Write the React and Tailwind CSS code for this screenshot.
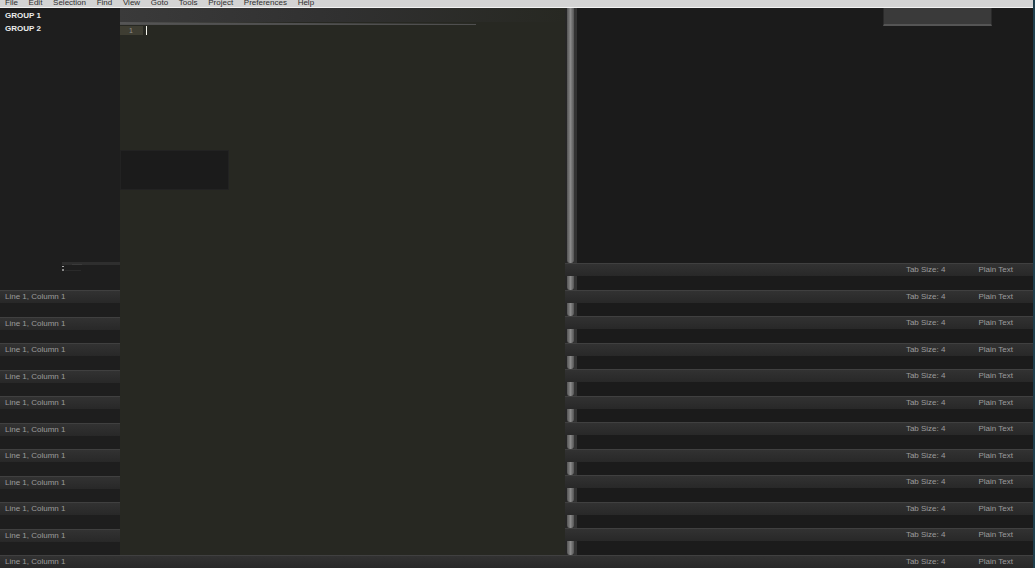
import React from "react";

const font = { fontFamily: '"Liberation Sans", Arial, sans-serif' };

function StatusBar({ left, right }) {
  return (
    <div className="h-[13px] shrink-0 flex items-center justify-between border-t border-[#404040] bg-gradient-to-b from-[#323232] to-[#282828] text-[8px] leading-none text-[#9c9c9c]">
      <span className="pl-[5px]">{left}</span>
      {right ? (
        <div className="flex gap-[33px] pr-[20px]">
          <span>Tab Size: 4</span>
          <span>Plain Text</span>
        </div>
      ) : null}
    </div>
  );
}

function Handle({ full }) {
  return (
    <div className="w-[12px] h-full flex bg-[#2b2b2b]">
      <div className="w-[2px] bg-[#262626]" />
      <div
        className={
          "w-[7px] h-full rounded-b-[3px] bg-gradient-to-r from-[#555] via-[#8a8a8a] to-[#555] " +
          (full ? "" : "mb-[1px]")
        }
      />
      <div className="flex-1 bg-[#333]" />
    </div>
  );
}

export default function App() {
  const menu = ["File", "Edit", "Selection", "Find", "View", "Goto", "Tools", "Project", "Preferences", "Help"];
  const leftUnits = Array.from({ length: 10 });
  const rightUnits = Array.from({ length: 11 });
  return (
    <div style={font} className="w-[1035px] h-[568px] overflow-hidden flex flex-col bg-[#1b1b1b] border-r-2 border-[#1f3f4d]">
      {/* menu bar */}
      <div className="h-[8px] shrink-0 overflow-hidden bg-[#d3d3d3] border-b border-[#f2f2f2] flex items-start">
        <div className="flex gap-[10.7px] pl-[5px] -mt-[2px] text-[8px] leading-[10px] text-[#2e2e2e]">
          {menu.map((m) => (
            <span key={m}>{m}</span>
          ))}
        </div>
      </div>

      {/* main */}
      <div className="h-[547px] shrink-0 flex">
        {/* left column */}
        <div className="w-[120px] shrink-0 flex flex-col bg-[#1e1e1e]">
          <div className="h-[282px] shrink-0 relative pt-[1px] pl-[5px] text-[8px] font-bold leading-[13px] text-[#ececec]">
            <div>GROUP 1</div>
            <div>GROUP 2</div>
            <div className="absolute left-[62px] top-[254px] w-[58px] h-[3px] bg-[#2e2e2e]" />
            <div className="absolute left-[72px] top-[256px] w-[10px] h-[1px] bg-[#3a3a3a]" />
            <div className="absolute left-[62px] top-[258px] w-[2px] h-[1px] bg-[#aaa]" />
            <div className="absolute left-[62px] top-[261px] w-[2px] h-[2px] bg-[#888]" />
            <div className="absolute left-[65px] top-[262px] w-[16px] h-[1px] bg-[#2a2a2a]" />
          </div>
          {leftUnits.map((_, i) => (
            <div key={i} className="flex-1 flex flex-col">
              <StatusBar left="Line 1, Column 1" />
              <div className="flex-1 bg-[#1e1e1e]" />
            </div>
          ))}
        </div>

        {/* editor */}
        <div className="w-[445px] shrink-0 relative flex flex-col bg-[#272822]">
          <div className="h-[14px] shrink-0 bg-gradient-to-r from-[#3a3a3a] via-[#303030] to-[#272822]" />
          <div className="h-[2px] w-[356px] shrink-0 bg-gradient-to-r from-[#555] to-[#4a4a4a] [clip-path:polygon(0_0,100%_100%,0_100%)]" />
          <div className="h-[1px] w-[356px] shrink-0 bg-[#4f4f4f]" />
          <div className="h-[9px] mt-[1px] flex items-center">
            <div className="w-[23px] h-full bg-[#3e3d32] text-[7px] leading-[9px] text-[#8f908a] pl-[9px]">1</div>
            <div className="ml-[3px] w-[1px] h-full bg-[#f8f8f0]" />
          </div>
          <div className="absolute left-0 top-[142px] w-[109px] h-[40px] bg-[#1b1b1b] border border-[#222]" />
        </div>

        {/* right column */}
        <div className="flex-1 flex flex-col">
          <div className="h-[255px] shrink-0 flex">
            <Handle full />
            <div className="flex-1 bg-[#1b1b1b] pl-[306px]">
              <div className="w-[109px] h-[18px] bg-[#3a3a3a] border-b-2 border-[#555] border-x border-x-[#2a2a2a]" />
            </div>
          </div>
          {rightUnits.map((_, i) => (
            <div key={i} className="flex-1 flex flex-col">
              <StatusBar right />
              <div className="flex-1 flex">
                <Handle />
                <div className="flex-1 bg-[#1b1b1b]" />
              </div>
            </div>
          ))}
        </div>
      </div>

      {/* bottom status */}
      <StatusBar left="Line 1, Column 1" right />
    </div>
  );
}
